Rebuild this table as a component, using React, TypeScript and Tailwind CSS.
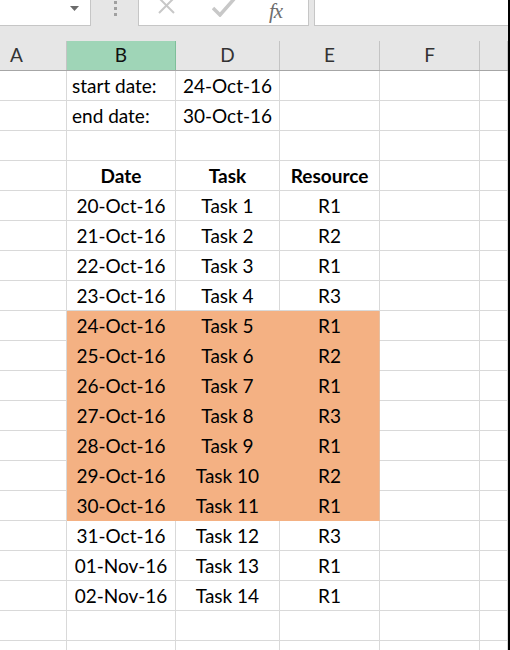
import React from "react";

// column widths (incl. 1px right gridline) for A, B, D, E, F and the cut-off one
const colW = ["w-[67px]", "w-[109px]", "w-[104px]", "w-[100px]", "w-[100px]", "w-[28px]"];
const letters = ["A", "B", "D", "E", "F", ""];

const resources = ["R1", "R2", "R1", "R3", "R1", "R2", "R1", "R3", "R1", "R2", "R1", "R3", "R1", "R1"];
const dates = [
  "20-Oct-16", "21-Oct-16", "22-Oct-16", "23-Oct-16", "24-Oct-16", "25-Oct-16", "26-Oct-16",
  "27-Oct-16", "28-Oct-16", "29-Oct-16", "30-Oct-16", "31-Oct-16", "01-Nov-16", "02-Nov-16",
];

type Row = { cells: string[]; bold?: boolean; hl?: boolean; leftB?: boolean };

const rows: Row[] = [
  { cells: ["", "start date:", "24-Oct-16", "", "", ""], leftB: true },
  { cells: ["", "end date:", "30-Oct-16", "", "", ""], leftB: true },
  { cells: ["", "", "", "", "", ""] },
  { cells: ["", "Date", "Task", "Resource", "", ""], bold: true },
  ...dates.map((d, i) => ({
    cells: ["", d, `Task ${i + 1}`, resources[i], "", ""],
    hl: i >= 4 && i <= 10,
  })),
  { cells: ["", "", "", "", "", ""] },
  { cells: ["", "", "", "", "", ""] },
];

function Toolbar() {
  return (
    <div className="h-[41px] shrink-0 bg-[#e6e6e6]">
      <div className="flex h-[26px]">
        {/* name box */}
        <div className="w-[91px] h-full bg-white border-r border-b border-[#c6c6c6] flex justify-end items-start pr-[11px] pt-[6px]">
          <svg width="9" height="5" viewBox="0 0 9 5">
            <path d="M0 0h9L4.5 5z" fill="#6b6b6b" />
          </svg>
        </div>
        <div className="w-[47px] flex justify-center">
          <div className="flex flex-col gap-[3px] pt-[1px] pl-[1px]">
            <span className="w-[3px] h-[3px] bg-[#a0a0a0]" />
            <span className="w-[3px] h-[3px] bg-[#a0a0a0]" />
            <span className="w-[3px] h-[3px] bg-[#a0a0a0]" />
          </div>
        </div>
        {/* cancel / enter / fx */}
        <div className="w-[171px] h-full bg-white border-l border-r border-b border-[#c6c6c6] flex items-start">
          <svg width="20" height="16" viewBox="0 0 20 16" className="ml-[18px] -mt-[2px]">
            <path d="M2 0L17 15M17 0L2 15" stroke="#c8c8c8" strokeWidth="2" />
          </svg>
          <svg width="24" height="18" viewBox="0 0 24 18" className="ml-[35px] -mt-[1px]">
            <path d="M1 9l7 7L22 0" stroke="#c8c8c8" strokeWidth="3.5" fill="none" />
          </svg>
          <span className="ml-[33px] text-[21px] leading-[22px] italic text-[#6e6e6e] font-['Liberation_Serif',serif] tracking-[-1px]">
            fx
          </span>
        </div>
        <div className="w-[5px]" />
        <div className="flex-1 h-full bg-white border-l border-b border-[#c6c6c6]" />
      </div>
    </div>
  );
}

export default function App() {
  return (
    <div className="w-[510px] h-[650px] overflow-hidden bg-white flex font-['Lato',sans-serif]">
      <div className="w-[508px] flex flex-col">
        <Toolbar />

        {/* column headers */}
        <div className="flex h-[30px] shrink-0 bg-[#e6e6e6] border-b border-[#a6a6a6] text-[19px] text-[#333]">
          {letters.map((l, i) => (
            <div
              key={i}
              className={`${colW[i]} h-full flex items-center border-r ${
                i === 1 ? "bg-[#9fd5b7] text-[#111] border-[#7fbf9a]" : "border-[#c4c4c4]"
              } ${i === 0 ? "justify-start pl-[10px]" : "justify-center"}`}
            >
              {l}
            </div>
          ))}
        </div>

        {/* cells */}
        {rows.map((r, ri) => (
          <div key={ri} className="flex h-[30px] shrink-0 text-[19px] text-black">
            {r.cells.map((c, ci) => {
              const fill = r.hl && ci >= 1 && ci <= 3;
              return (
                <div
                  key={ci}
                  className={`${colW[ci]} h-full flex items-center pt-[1px] border-r border-b whitespace-nowrap ${
                    fill ? "bg-[#f4b183] border-[#f4b183]" : "border-[#d9d9d9]"
                  } ${fill && ci === 3 ? "border-r-[#e6c0a3]" : ""} ${
                    r.leftB && ci === 1 ? "justify-start pl-[5px]" : "justify-center"
                  } ${r.bold ? "font-bold" : ""}`}
                >
                  {c}
                </div>
              );
            })}
          </div>
        ))}
      </div>
      <div className="w-[2px] bg-black" />
    </div>
  );
}
